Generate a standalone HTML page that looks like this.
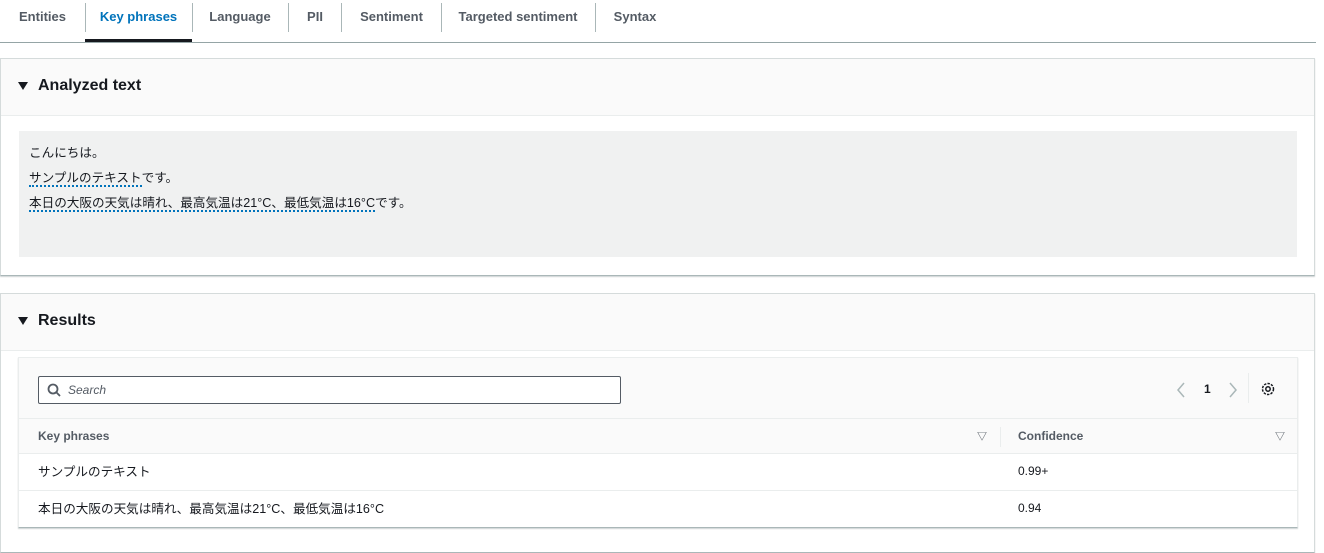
<!DOCTYPE html><html><head><meta charset="utf-8"><style>
*{box-sizing:border-box;margin:0;padding:0}
body{width:1324px;height:545px;overflow:hidden;background:#fff;font-family:"Liberation Sans","Noto Sans CJK JP",sans-serif;color:#16191f;position:relative}
.a{position:absolute}
.tab{position:absolute;top:0;height:42px;line-height:34px;font-size:13px;font-weight:bold;color:#545b64;text-align:center}
.sep{position:absolute;top:3px;height:29px;border-left:1px solid #aab7b8}
.box{position:absolute;left:0;width:1315px;border:1px solid #d5dbdb;border-bottom-color:#aab7b8;box-shadow:0 1px 1px rgba(0,28,36,.2)}
.hd{height:57px;background:#fafafa;border-bottom:1px solid #eaeded;font-size:16px;font-weight:bold;line-height:54px;padding-left:37px;position:relative}
.hd:before{content:"";position:absolute;left:17px;top:23px;border-left:5px solid transparent;border-right:5px solid transparent;border-top:8px solid #16191f}
.t{font-size:12.6px;position:absolute;left:29px}
.u{border-bottom:2px dotted #0073bb}
.row{position:absolute;left:0;width:1278px;border-top:1px solid #eaeded;font-size:12.6px}
</style></head><body>
<div class="tab" style="left:0;width:85px">Entities</div>
<div class="sep" style="left:85px"></div>
<div class="tab" style="left:85px;width:107px;color:#0073bb">Key phrases</div>
<div class="a" style="left:85px;top:39px;width:107px;height:3px;background:#16191f"></div>
<div class="sep" style="left:192px"></div>
<div class="tab" style="left:192px;width:96px">Language</div>
<div class="sep" style="left:288px"></div>
<div class="tab" style="left:288px;width:54px">PII</div>
<div class="sep" style="left:341px"></div>
<div class="tab" style="left:341px;width:101px">Sentiment</div>
<div class="sep" style="left:441px"></div>
<div class="tab" style="left:441px;width:154px">Targeted sentiment</div>
<div class="sep" style="left:595px"></div>
<div class="tab" style="left:595px;width:80px">Syntax</div>
<div class="a" style="left:0;top:42px;width:1316px;border-top:1px solid #95a5a6"></div>

<div class="box" style="top:58px;height:218px">
<div class="hd">Analyzed text</div>
<div class="a" style="left:18px;top:72px;width:1278px;height:126px;background:#f0f1f1">
<div class="t" style="left:10px;top:11px">こんにちは。</div>
<div class="t" style="left:10px;top:36px"><span class="u">サンプルのテキスト</span>です。</div>
<div class="t" style="left:10px;top:61px"><span class="u">本日の大阪の天気は晴れ、最高気温は21°C、最低気温は16°C</span>です。</div>
</div></div>

<div class="box" style="top:293px;height:260px">
<div class="hd">Results</div>
<div class="a" style="left:17px;top:63px;width:1280px;height:171px;border:1px solid #eaeded;border-bottom-color:#aab7b8;box-shadow:0 1px 1px rgba(0,28,36,.2)">
<div class="a" style="left:0;top:0;width:1278px;height:61px;background:#fafafa"></div>
<div class="a" style="left:19px;top:18px;width:583px;height:28px;border:1px solid #545b64;border-radius:2px;background:#fff">
<svg class="a" style="left:8px;top:6px" width="14" height="14" viewBox="0 0 14 14"><circle cx="6" cy="6" r="4.5" fill="none" stroke="#545b64" stroke-width="1.8"/><path d="M9.3 9.3L13 13" stroke="#545b64" stroke-width="1.8"/></svg>
<span class="a" style="left:29px;top:6px;font-size:12px;font-style:italic;color:#545b64">Search</span></div>
<svg class="a" style="left:1157px;top:24px" width="10" height="16"><path d="M8 1L2 8l6 7" fill="none" stroke="#aab7b8" stroke-width="1.5"/></svg>
<span class="a" style="left:1185px;top:24px;font-size:12px;font-weight:bold">1</span>
<svg class="a" style="left:1209px;top:24px" width="10" height="16"><path d="M2 1l6 7-6 7" fill="none" stroke="#aab7b8" stroke-width="1.5"/></svg>
<div class="a" style="left:1229px;top:15px;height:30px;border-left:1px solid #eaeded"></div>
<svg class="a" style="left:1241px;top:23px" width="16" height="16" viewBox="0 0 16 16"><circle cx="8" cy="8" r="2.2" fill="none" stroke="#16191f" stroke-width="1.5"/><circle cx="8" cy="8" r="5.5" fill="none" stroke="#16191f" stroke-width="1.5" stroke-dasharray="2.4 1.2"/></svg>
<div class="row" style="top:60px;height:35px;font-weight:bold;color:#545b64;background:#fafafa;font-size:12px">
<span class="a" style="left:19px;top:10px">Key phrases</span>
<span class="a" style="left:958px;top:9px;font-size:10px">▽</span>
<div class="a" style="left:981px;top:8px;height:20px;border-left:1px solid #eaeded"></div>
<span class="a" style="left:999px;top:10px">Confidence</span>
<span class="a" style="left:1256px;top:9px;font-size:10px">▽</span></div>
<div class="row" style="top:95px;height:37px"><span class="a" style="left:19px;top:7px">サンプルのテキスト</span><span class="a" style="left:999px;top:10px;font-size:12px">0.99+</span></div>
<div class="row" style="top:132px;height:37px"><span class="a" style="left:19px;top:7px">本日の大阪の天気は晴れ、最高気温は21°C、最低気温は16°C</span><span class="a" style="left:999px;top:10px;font-size:12px">0.94</span></div>
</div></div>
</body></html>
